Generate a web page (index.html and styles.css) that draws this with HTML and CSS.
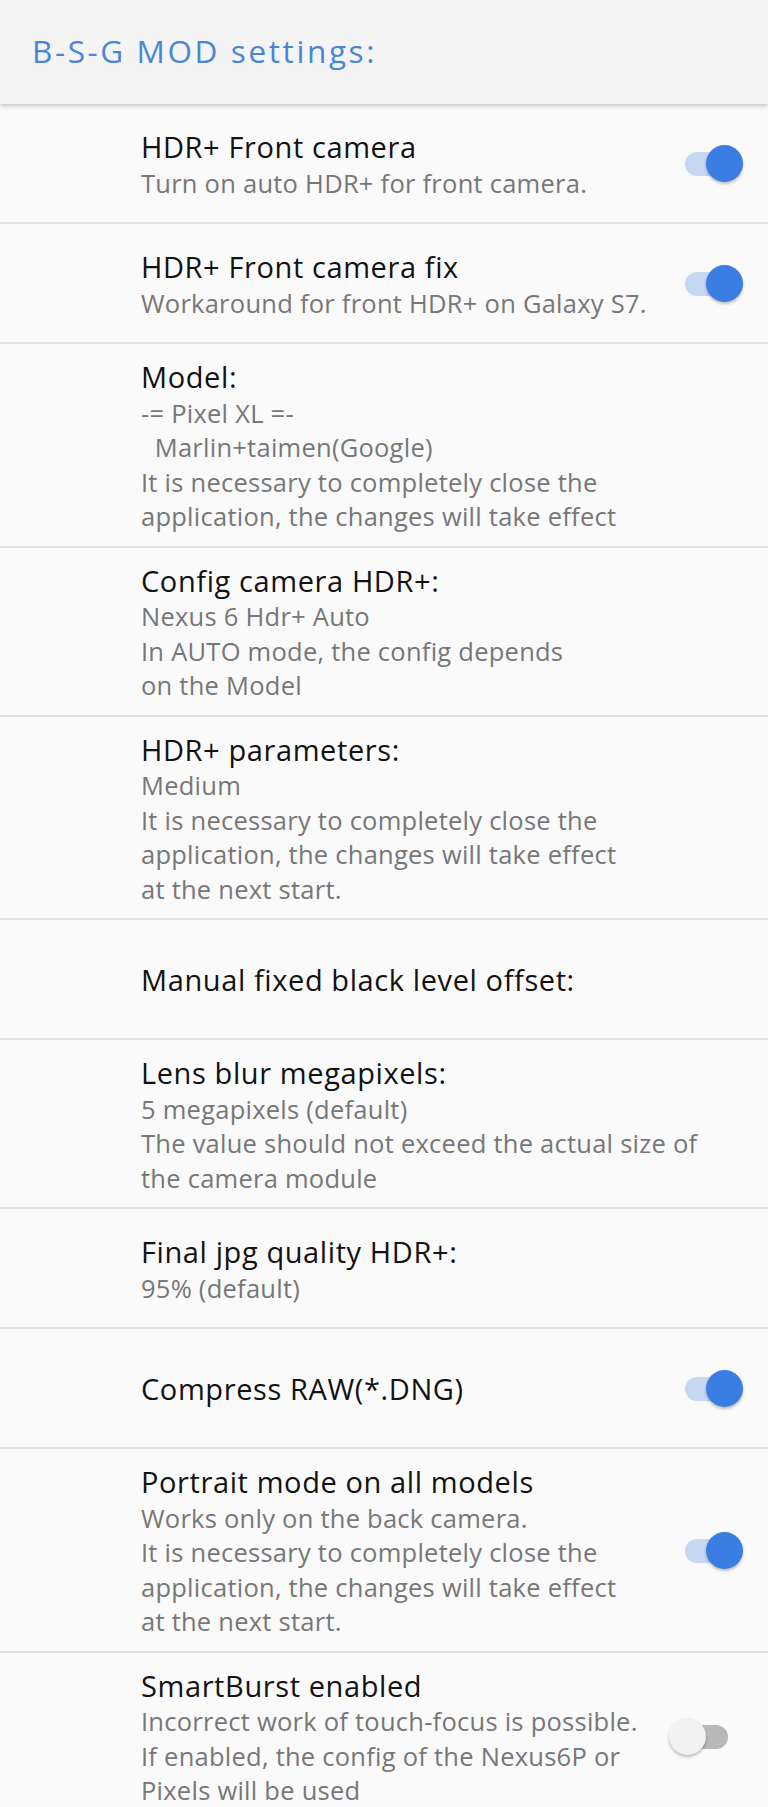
FILE: index.html
```html
<!DOCTYPE html>
<html>
<head>
<meta charset="utf-8">
<link rel="stylesheet" href="styles.css">
</head>
<body>
<header class="appbar"><h1 class="appbar-title">B-S-G MOD settings:</h1></header>
<main class="list">
  <div class="row">
    <div class="text"><div class="title">HDR+ Front camera</div><div class="desc">Turn on auto HDR+ for front camera.</div></div>
    <div class="switch on"><span class="track"></span><span class="thumb"></span></div>
  </div>
  <div class="row">
    <div class="text"><div class="title">HDR+ Front camera fix</div><div class="desc">Workaround for front HDR+ on Galaxy S7.</div></div>
    <div class="switch on"><span class="track"></span><span class="thumb"></span></div>
  </div>
  <div class="row">
    <div class="text"><div class="title">Model:</div><div class="desc">-= Pixel XL =-<br>&nbsp;&nbsp;Marlin+taimen(Google)<br>It is necessary to completely close the<br>application, the changes will take effect</div></div>
  </div>
  <div class="row">
    <div class="text"><div class="title">Config camera HDR+:</div><div class="desc">Nexus 6 Hdr+ Auto<br>In AUTO mode, the config depends<br>on the Model</div></div>
  </div>
  <div class="row">
    <div class="text"><div class="title">HDR+ parameters:</div><div class="desc">Medium<br>It is necessary to completely close the<br>application, the changes will take effect<br>at the next start.</div></div>
  </div>
  <div class="row">
    <div class="text"><div class="title">Manual fixed black level offset:</div></div>
  </div>
  <div class="row">
    <div class="text"><div class="title">Lens blur megapixels:</div><div class="desc">5 megapixels (default)<br>The value should not exceed the actual size of<br>the camera module</div></div>
  </div>
  <div class="row">
    <div class="text"><div class="title">Final jpg quality HDR+:</div><div class="desc">95% (default)</div></div>
  </div>
  <div class="row">
    <div class="text"><div class="title">Compress RAW(*.DNG)</div></div>
    <div class="switch on"><span class="track"></span><span class="thumb"></span></div>
  </div>
  <div class="row">
    <div class="text"><div class="title">Portrait mode on all models</div><div class="desc">Works only on the back camera.<br>It is necessary to completely close the<br>application, the changes will take effect<br>at the next start.</div></div>
    <div class="switch on"><span class="track"></span><span class="thumb"></span></div>
  </div>
  <div class="row">
    <div class="text"><div class="title">SmartBurst enabled</div><div class="desc">Incorrect work of touch-focus is possible.<br>If enabled, the config of the Nexus6P or<br>Pixels will be used</div></div>
    <div class="switch off"><span class="track"></span><span class="thumb"></span></div>
  </div>
</main>
</body>
</html>
```
FILE: styles.css
```css
html, body {
  margin: 0;
  padding: 0;
  background: #fafafa;
}
body {
  font-family: "Open Sans", Roboto, sans-serif;
  width: 768px;
  overflow: hidden;
}
.appbar {
  height: 104px;
  background: #f4f4f4;
  box-shadow: 0 2px 4px rgba(0,0,0,0.22);
  position: relative;
  z-index: 1;
  display: flex;
  align-items: center;
  padding-left: 32px;
  padding-bottom: 3px;
  box-sizing: border-box;
}
.appbar-title {
  margin: 0;
  font-weight: 400;
  font-size: 31.5px;
  color: #4a86d6;
  letter-spacing: 2.6px;
}
.list {
  display: flex;
  flex-direction: column;
}
.row {
  display: flex;
  align-items: center;
  min-height: 120px;
  box-sizing: border-box;
  padding: 14px 25px 12px 141px;
  border-bottom: 2px solid #e2e2e2;
}
.text {
  flex: 1;
  min-width: 0;
}
.title {
  font-size: 29px;
  line-height: 37.5px;
  color: #121212;
  white-space: nowrap;
  letter-spacing: 0.6px;
}
.desc {
  font-size: 25.5px;
  line-height: 34.5px;
  color: #777;
  white-space: nowrap;
  letter-spacing: 0.25px;
}
.switch {
  position: relative;
  width: 74px;
  height: 38px;
  flex: none;
}
.track {
  position: absolute;
  left: 16px;
  top: 7px;
  width: 43px;
  height: 24px;
  border-radius: 12px;
}
.thumb {
  position: absolute;
  top: 0;
  width: 37px;
  height: 37px;
  border-radius: 50%;
  box-shadow: 0 2px 3px rgba(0,0,0,0.25);
}
.on .track { background: #c6d7f3; }
.on .thumb { left: 37px; background: #3a7ee3; }
.off .track { background: #b8b8b8; }
.off .thumb { left: 0; background: #f2f2f2; }
```
